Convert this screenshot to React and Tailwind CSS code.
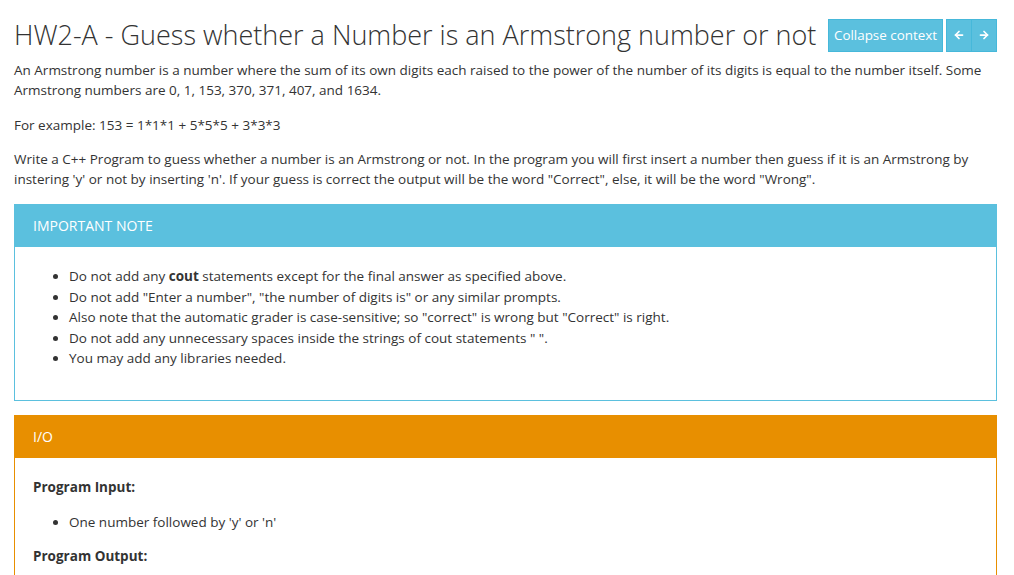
import React from 'react'
import { ArrowLeft, ArrowRight } from 'lucide-react'

const font = { fontFamily: '"Open Sans", "Liberation Sans", sans-serif' }

function Panel({ title, color, className, children }) {
  return (
    <div className={`border ${color.border} ${className}`}>
      <div className={`${color.bg} h-[42px] flex items-center px-[18px] text-white text-[14px]`}>
        {title}
      </div>
      <div className="bg-white px-[18px] pt-[19px] pb-[31px]">{children}</div>
    </div>
  )
}

export default function App() {
  return (
    <div className="bg-white w-[1014px] h-[575px] overflow-hidden text-[#333] pl-[14px] pr-[17px]" style={font}>
      <div className="flex items-center justify-between pt-[16px]">
        <h1 className="text-[27px] font-light leading-[38px] whitespace-nowrap">
          HW2-A - Guess whether a Number is an Armstrong number or not
        </h1>
        <div className="flex items-center gap-[3px]">
          <button className="bg-[#5bc0de] border border-[#46b8da] text-white text-[13.4px] h-[33px] px-[5px] whitespace-nowrap">
            Collapse context
          </button>
          <div className="flex border border-[#46b8da] h-[33px]">
            <span className="bg-[#5bc0de] w-[25px] flex items-center justify-center border-r border-[#46b8da]">
              <ArrowLeft size={12} strokeWidth={3.5} color="white" />
            </span>
            <span className="bg-[#5bc0de] w-[24px] flex items-center justify-center">
              <ArrowRight size={12} strokeWidth={3.5} color="white" />
            </span>
          </div>
        </div>
      </div>

      <div className="text-[13.5px] leading-[20px] mt-[6px]">
        <p>
          An Armstrong number is a number where the sum of its own digits each raised to the power of the number of its digits is equal to the number itself. Some Armstrong numbers are 0, 1, 153, 370, 371, 407, and 1634.
        </p>
        <p className="mt-[15px]">For example: 153 = 1*1*1 + 5*5*5 + 3*3*3</p>
        <p className="mt-[14px]">
          Write a C++ Program to guess whether a number is an Armstrong or not. In the program you will first insert a number then guess if it is an Armstrong by instering 'y' or not by inserting 'n'. If your guess is correct the output will be the word "Correct", else, it will be the word "Wrong".
        </p>

        <Panel title="IMPORTANT NOTE" className="mt-[15px]" color={{ bg: 'bg-[#5bc0de]', border: 'border-[#5bc0de]' }}>
          <ul className="list-disc pl-[36px] leading-[20.5px]">
            <li>Do not add any <b>cout</b> statements except for the final answer as specified above.</li>
            <li>Do not add "Enter a number", "the number of digits is" or any similar prompts.</li>
            <li>Also note that the automatic grader is case-sensitive; so "correct" is wrong but "Correct" is right.</li>
            <li>Do not add any unnecessary spaces inside the strings of cout statements " ".</li>
            <li>You may add any libraries needed.</li>
          </ul>
        </Panel>

        <Panel title="I/O" className="mt-[14px]" color={{ bg: 'bg-[#e88f00]', border: 'border-[#e88f00]' }}>
          <p className="font-bold">Program Input:</p>
          <ul className="list-disc pl-[36px] mt-[15px]">
            <li>One number followed by 'y' or 'n'</li>
          </ul>
          <p className="font-bold mt-[14px]">Program Output:</p>
        </Panel>
      </div>
    </div>
  )
}
